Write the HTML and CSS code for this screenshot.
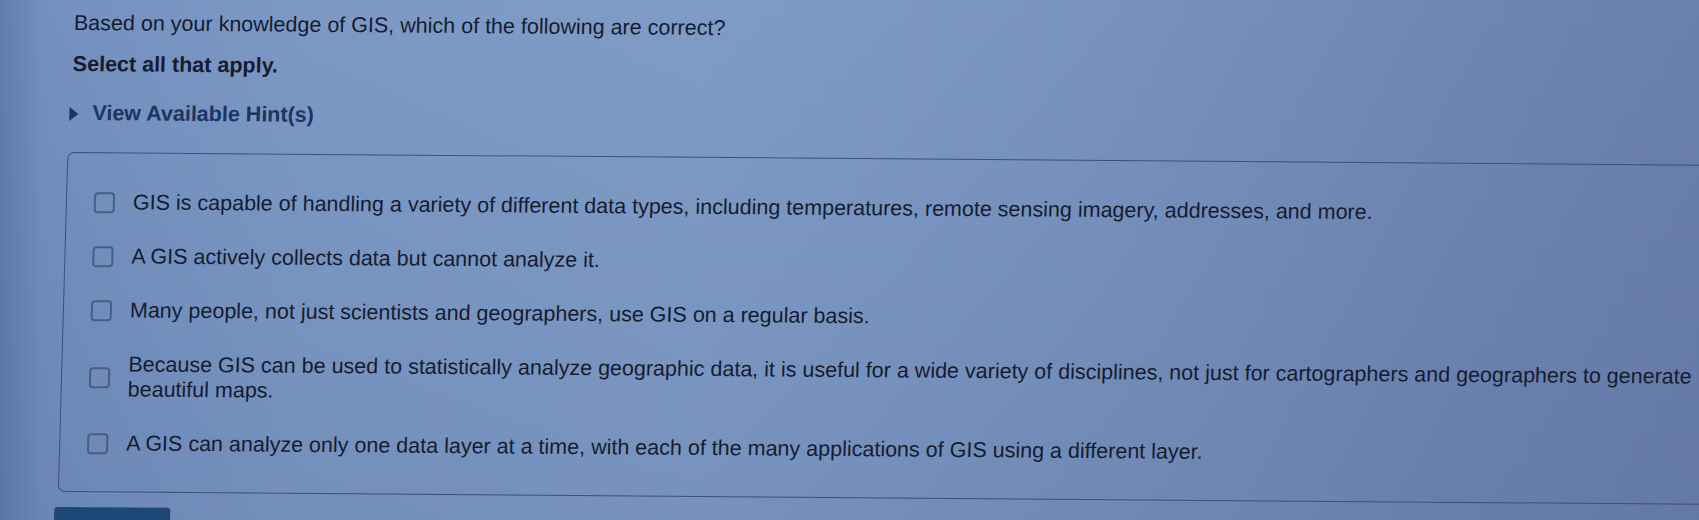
FILE: index.html
```html
<!DOCTYPE html>
<html lang="en">
<head>
<meta charset="utf-8">
<title>GIS question</title>
<link rel="stylesheet" href="styles.css">
</head>
<body>
<main class="page">
  <p class="question">Based on your knowledge of GIS, which of the following are correct?</p>
  <p class="instruction">Select all that apply.</p>
  <div class="hint"><span class="hint-arrow"></span><span class="hint-text">View Available Hint(s)</span></div>
  <div class="answers">
    <label class="option"><span class="box"></span><span class="opt-text">GIS is capable of handling a variety of different data types, including temperatures, remote sensing imagery, addresses, and more.</span></label>
    <label class="option"><span class="box"></span><span class="opt-text">A GIS actively collects data but cannot analyze it.</span></label>
    <label class="option"><span class="box"></span><span class="opt-text">Many people, not just scientists and geographers, use GIS on a regular basis.</span></label>
    <label class="option"><span class="box"></span><span class="opt-text">Because GIS can be used to statistically analyze geographic data, it is useful for a wide variety of disciplines, not just for cartographers and geographers to generate beautiful maps.</span></label>
    <label class="option"><span class="box"></span><span class="opt-text">A GIS can analyze only one data layer at a time, with each of the many applications of GIS using a different layer.</span></label>
  </div>
  <div class="submit"></div>
</main>
</body>
</html>
```
FILE: styles.css
```css
html, body {
  margin: 0;
  height: 100%;
  overflow: hidden;
}
body {
  width: 1699px;
  height: 520px;
  font-family: "Liberation Sans", Arial, sans-serif;
  color: #161c30;
  background:
    linear-gradient(180deg, rgba(120,150,200,0) 0%, rgba(40,55,100,0.10) 100%),
    linear-gradient(90deg, #607dae 0px, #7390c0 45px, #7c99c5 300px, #7f9cc7 700px, #7893bf 1100px, #6f87b5 1450px, #6a80ad 1699px);
}
.page {
  padding: 11px 0 0 69px;
  transform: matrix(1, 0.0078, -0.028, 1, 0, 0);
  transform-origin: 74px 200px;
}
.question {
  margin: 0;
  font-size: 21.5px;
  line-height: 25px;
}
.instruction {
  margin: 16px 0 0;
  font-size: 21.5px;
  line-height: 25px;
  font-weight: bold;
}
.hint {
  margin: 24px 0 0 -2px;
  display: flex;
  align-items: center;
  gap: 14px;
  font-size: 21.5px;
  line-height: 25px;
  font-weight: bold;
  color: #1c3563;
}
.hint-arrow {
  width: 0;
  height: 0;
  border-left: 9px solid #1d3563;
  border-top: 7px solid transparent;
  border-bottom: 7px solid transparent;
}
.answers {
  margin: 26px 0 0 -3px;
  width: 1720px;
  box-sizing: border-box;
  border: 1.5px solid #3c5179;
  border-radius: 7px;
  padding: 37px 20px 35px 27px;
  display: flex;
  flex-direction: column;
  gap: 29px;
}
.option {
  display: flex;
  align-items: center;
  gap: 18px;
  font-size: 21.5px;
  line-height: 25px;
}
.box {
  flex: none;
  width: 17px;
  height: 17px;
  border: 2px solid #4a5d84;
  border-radius: 4px;
}
.opt-text {
  max-width: 1600px;
}
.submit {
  margin: 15px 0 0 -6px;
  width: 116px;
  height: 30px;
  background: #1d4776;
  border-radius: 3px 3px 0 0;
}
```
